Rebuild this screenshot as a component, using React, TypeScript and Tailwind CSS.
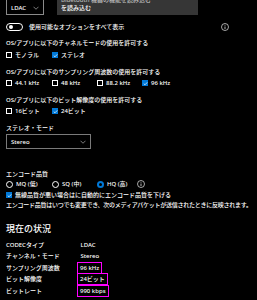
import React from "react";

const font = "font-['Noto_Sans','Noto_Sans_CJK_JP',sans-serif]";

function Box({ checked }: { checked?: boolean }) {
  if (checked) {
    return (
      <span className="flex h-[6px] w-[6px] shrink-0 items-center justify-center bg-[#0078d7]">
        <svg width="5" height="5" viewBox="0 0 10 10">
          <path d="M1.5 5.2 L4 7.6 L8.6 2.6" fill="none" stroke="#fff" strokeWidth="1.4" />
        </svg>
      </span>
    );
  }
  return <span className="h-[6px] w-[6px] shrink-0 border border-white" />;
}

function Radio({ on }: { on?: boolean }) {
  if (on) {
    return (
      <span className="flex h-[7px] w-[7px] shrink-0 items-center justify-center rounded-full bg-[#0078d7]">
        <span className="h-[3px] w-[3px] rounded-full bg-black" />
      </span>
    );
  }
  return <span className="h-[7px] w-[7px] shrink-0 rounded-full border border-white" />;
}

function Info() {
  return (
    <svg width="8" height="8" viewBox="0 0 16 16" className="shrink-0">
      <circle cx="8" cy="8" r="7" fill="none" stroke="#fff" strokeWidth="1.3" />
      <path d="M8 7 V12" stroke="#fff" strokeWidth="1.4" />
      <circle cx="8" cy="4.6" r="0.9" fill="#fff" />
    </svg>
  );
}

function Chevron() {
  return (
    <svg width="6" height="4" viewBox="0 0 12 8">
      <path d="M1 1.5 L6 6.5 L11 1.5" fill="none" stroke="#bbb" strokeWidth="1.3" />
    </svg>
  );
}

function Check({ label, checked, w = "w-[46px]" }: { label: string; checked?: boolean; w?: string }) {
  return (
    <div className={`flex items-center gap-[2px] ${w}`}>
      <Box checked={checked} />
      <span className="ml-[1px]">{label}</span>
    </div>
  );
}

const status = [
  { k: "CODECタイプ", v: "LDAC", mark: false },
  { k: "チャンネル・モード", v: "Stereo", mark: false },
  { k: "サンプリング周波数", v: "96 kHz", mark: true },
  { k: "ビット解像度", v: "24ビット", mark: true },
  { k: "ビットレート", v: "990 kbps", mark: true },
];

export default function App() {
  return (
    <div className={`h-[300px] w-[257px] overflow-hidden bg-black pl-[6px] text-[6px] font-medium leading-none text-white ${font}`}>
      {/* top row, cut off at the top */}
      <div className="-mt-[5px] flex h-[20px] items-stretch gap-[13px]">
        <div className="flex w-[38px] items-center justify-between border border-[#8a8a8a] px-[4px] pt-[5px]">
          <span>LDAC</span>
          <Chevron />
        </div>
        <div className="flex w-[141px] flex-col justify-end gap-[2px] bg-[#363636] px-[4px] pb-[4px]">
          <span className="text-[#bbb]">Bluetooth 機器の機能を読み込む</span>
          <span>を読み込む</span>
        </div>
      </div>

      <div className="mt-[7px] flex h-[10px] items-center pr-[28px]">
        <span className="flex h-[8px] w-[17px] items-center rounded-full border border-white px-[1.5px]">
          <span className="h-[4px] w-[4px] rounded-full bg-white" />
        </span>
        <span className="ml-[6px] flex-1">使用可能なオプションをすべて表示</span>
        <Info />
      </div>

      <div className="mt-[6px] flex h-[10px] items-center">OS/アプリに以下のチャネルモードの使用を許可する</div>
      <div className="mt-[2px] flex h-[10px] items-center">
        <Check label="モノラル" />
        <Check label="ステレオ" checked />
      </div>

      <div className="mt-[7px] flex h-[10px] items-center">OS/アプリに以下のサンプリング周波数の使用を許可する</div>
      <div className="mt-[1px] flex h-[10px] items-center">
        <Check label="44.1 kHz" />
        <Check label="48 kHz" w="w-[45px]" />
        <Check label="88.2 kHz" w="w-[45px]" />
        <Check label="96 kHz" checked />
      </div>

      <div className="mt-[7px] flex h-[10px] items-center">OS/アプリに以下のビット解像度の使用を許可する</div>
      <div className="mt-[1px] flex h-[10px] items-center">
        <Check label="16ビット" />
        <Check label="24ビット" checked />
      </div>

      <div className="mt-[7px] flex h-[10px] items-center">ステレオ・モード</div>
      <div className="mt-[1px] flex h-[15px] w-[85px] items-center justify-between border border-[#7a7a7a] px-[4px]">
        <span>Stereo</span>
        <Chevron />
      </div>

      <div className="mt-[20px] flex h-[10px] items-center">エンコード品質</div>
      <div className="flex h-[10px] items-center">
        <div className="flex w-[46px] items-center gap-[3px]"><Radio /><span>MQ (低)</span></div>
        <div className="flex w-[45px] items-center gap-[3px]"><Radio /><span>SQ (中)</span></div>
        <div className="flex items-center gap-[3px]"><Radio on /><span>HQ (高)</span></div>
        <span className="ml-[9px]"><Info /></span>
      </div>
      <div className="mt-[1px] flex h-[10px] items-center gap-[3px]">
        <Box checked />
        <span>無線品質が悪い場合はに自動的にエンコード品質を下げる</span>
      </div>
      <div className="flex h-[10px] items-center whitespace-nowrap tracking-[-0.25px]">
        エンコード品質はいつでも変更でき、次のメディアパケットが送信されたときに反映されます。
      </div>

      <div className="mt-[12px] flex h-[12px] items-center text-[9px]">現在の状況</div>
      <div className="mt-[5px] grid grid-cols-[71px_1fr]">
        {status.map((r) => (
          <React.Fragment key={r.k}>
            <div className="flex h-[11.5px] items-center">{r.k}</div>
            <div className="flex h-[11.5px] items-center">
              <span
                className={
                  r.mark
                    ? "flex h-[12px] items-center border-[1.5px] border-[#ff00ff] px-[2px]"
                    : "flex h-[12px] items-center px-[3.5px]"
                }
              >
                {r.v}
              </span>
            </div>
          </React.Fragment>
        ))}
      </div>
    </div>
  );
}
